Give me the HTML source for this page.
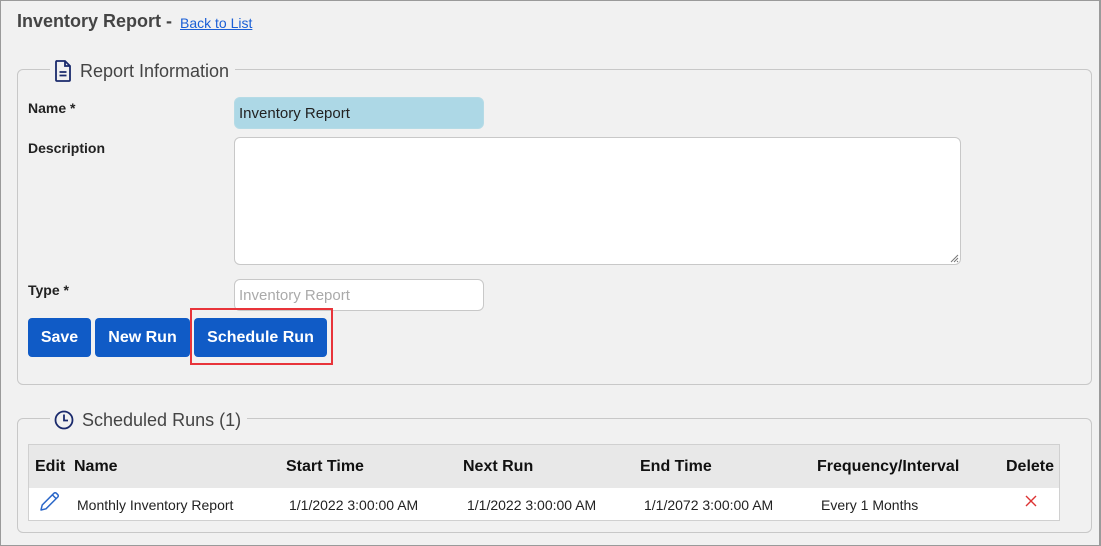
<!DOCTYPE html>
<html><head><meta charset="utf-8"><style>
*{box-sizing:border-box;margin:0;padding:0}
body{width:1101px;height:546px;background:#f1f1f1;font-family:"Liberation Sans",sans-serif;position:relative;overflow:hidden;color:#222}
.frame{position:absolute;left:0;top:0;width:1101px;height:546px;border:1px solid #9a9a9a;border-width:1px 2px 1px 1px}
.a{position:absolute}
.fs{position:absolute;border:1px solid #c8c8c8;border-radius:6px}
.leg{position:absolute;background:#f1f1f1;padding:0 6px 0 4px;font-size:18px;color:#444;display:flex;align-items:center;gap:8px}
.lbl{position:absolute;font-size:14px;font-weight:bold;color:#222}
.inp{position:absolute;border:1px solid #c8c8c8;border-radius:6px;background:#fff;font-size:15px;padding-left:4px;display:flex;align-items:center}
.btn{position:absolute;top:318px;height:39px;background:#105bc6;color:#fff;font-weight:bold;font-size:16px;border-radius:4px;display:flex;align-items:center;justify-content:center}
.h{position:absolute;top:458px;font-size:16px;font-weight:bold;color:#111}
.c{position:absolute;top:497px;font-size:14px;color:#222}
</style></head><body>
<div class="frame"></div>
<div class="a" style="left:17px;top:11px;font-size:18px;font-weight:bold;color:#444">Inventory Report -</div>
<a class="a" style="left:180px;top:15px;font-size:14px;color:#1a5fd6;text-decoration:underline">Back to List</a>

<div class="fs" style="left:17px;top:69px;width:1075px;height:316px"></div>
<div class="leg" style="left:50px;top:59px;height:24px">
<svg width="18" height="22" viewBox="0 0 18 22"><path d="M2 1h9l5 5v14a1 1 0 0 1-1 1H3a1 1 0 0 1-1-1V2a1 1 0 0 1 1-1z M11 1v5h5" fill="none" stroke="#1a2a6c" stroke-width="1.8"/><path d="M5.5 12h7M5.5 15.5h7" stroke="#1a2a6c" stroke-width="1.8"/></svg>
<span>Report Information</span></div>

<div class="lbl" style="left:28px;top:100px">Name *</div>
<div class="inp" style="left:234px;top:97px;width:250px;height:32px;background:#add8e6;border-color:#b5dbe6;color:#222">Inventory Report</div>
<div class="lbl" style="left:28px;top:140px">Description</div>
<div class="inp" style="left:234px;top:137px;width:727px;height:128px"></div>
<svg class="a" style="left:950px;top:254px" width="9" height="9" viewBox="0 0 9 9"><path d="M8 1L1 8M8 4L4 8M8 7L7 8" stroke="#777" stroke-width="1"/></svg>
<div class="lbl" style="left:28px;top:282px">Type *</div>
<div class="inp" style="left:234px;top:279px;width:250px;height:32px;color:#aaa">Inventory Report</div>

<div class="btn" style="left:28px;width:63px">Save</div>
<div class="btn" style="left:95px;width:95px">New Run</div>
<div class="btn" style="left:194px;width:133px">Schedule Run</div>
<div class="a" style="left:190px;top:308px;width:143px;height:57px;border:2px solid #e8343a"></div>

<div class="fs" style="left:17px;top:418px;width:1075px;height:115px"></div>
<div class="leg" style="left:50px;top:408px;height:24px">
<svg width="20" height="20" viewBox="0 0 20 20"><circle cx="10" cy="10" r="8.5" fill="none" stroke="#1a2a6c" stroke-width="1.8"/><path d="M10 4.5V10.5H14" fill="none" stroke="#1a2a6c" stroke-width="1.8"/></svg>
<span>Scheduled Runs (1)</span></div>

<div class="a" style="left:28px;top:444px;width:1032px;height:77px;border:1px solid #d0d0d0;background:#fff"></div>
<div class="a" style="left:29px;top:445px;width:1030px;height:43px;background:#e8e8e8"></div>
<div class="h" style="left:35px">Edit</div>
<div class="h" style="left:74px">Name</div>
<div class="h" style="left:286px">Start Time</div>
<div class="h" style="left:463px">Next Run</div>
<div class="h" style="left:640px">End Time</div>
<div class="h" style="left:817px">Frequency/Interval</div>
<div class="h" style="left:1006px">Delete</div>
<svg class="a" style="left:38px;top:490px" width="23" height="23" viewBox="0 0 23 23"><path d="M3 20l1.2-5L16 3.2a1.6 1.6 0 0 1 2.3 0l1.5 1.5a1.6 1.6 0 0 1 0 2.3L8 18.8z M14.5 5l3.5 3.5" fill="none" stroke="#2a66c8" stroke-width="1.5" stroke-linejoin="round"/></svg>
<div class="c" style="left:77px">Monthly Inventory Report</div>
<div class="c" style="left:289px">1/1/2022 3:00:00 AM</div>
<div class="c" style="left:467px">1/1/2022 3:00:00 AM</div>
<div class="c" style="left:644px">1/1/2072 3:00:00 AM</div>
<div class="c" style="left:821px">Every 1 Months</div>
<svg class="a" style="left:1025px;top:495px" width="12" height="12" viewBox="0 0 12 12"><path d="M1 1l10 10M11 1L1 11" stroke="#d33" stroke-width="1.4"/></svg>
</body></html>
